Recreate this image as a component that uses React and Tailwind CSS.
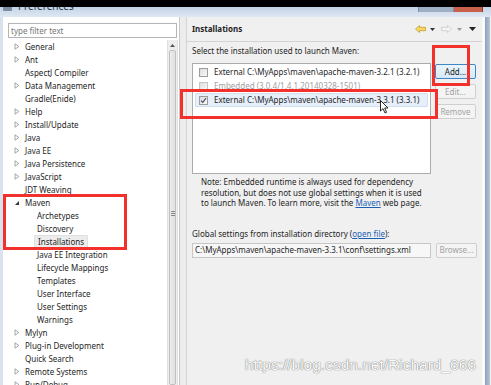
import { useState } from "react";

const tree = [
  { label: "General", arrow: true },
  { label: "Ant", arrow: true },
  { label: "AspectJ Compiler" },
  { label: "Data Management", arrow: true },
  { label: "Gradle(Enide)" },
  { label: "Help", arrow: true },
  { label: "Install/Update", arrow: true },
  { label: "Java", arrow: true },
  { label: "Java EE", arrow: true },
  { label: "Java Persistence", arrow: true },
  { label: "JavaScript", arrow: true },
  { label: "JDT Weaving" },
  { label: "Maven", open: true },
  { label: "Archetypes", child: true },
  { label: "Discovery", child: true },
  { label: "Installations", child: true, selected: true },
  { label: "Java EE Integration", child: true },
  { label: "Lifecycle Mappings", child: true },
  { label: "Templates", child: true },
  { label: "User Interface", child: true },
  { label: "User Settings", child: true },
  { label: "Warnings", child: true },
  { label: "Mylyn", arrow: true },
  { label: "Plug-in Development", arrow: true },
  { label: "Quick Search" },
  { label: "Remote Systems", arrow: true },
  { label: "Run/Debug", arrow: true },
];

const installs = [
  { label: "External C:\\MyApps\\maven\\apache-maven-3.2.1 (3.2.1)" },
  { label: "Embedded (3.0.4/1.4.1.20140328-1501)", dim: true },
  { label: "External C:\\MyApps\\maven\\apache-maven-3.3.1 (3.3.1)", checked: true },
];

const Arrow = ({ open }) =>
  open ? (
    <svg width="6" height="6" viewBox="0 0 6 6" className="shrink-0">
      <path d="M5 1 L5 5 L1 5 Z" fill="#333" />
    </svg>
  ) : (
    <svg width="6" height="7" viewBox="0 0 6 7" className="shrink-0">
      <path d="M1 0.8 L4.8 3.5 L1 6.2 Z" fill="none" stroke="#9a9a9a" strokeWidth="0.9" />
    </svg>
  );

const Checkbox = ({ checked, dim }) => (
  <div
    className={`w-[9px] h-[9px] shrink-0 border flex items-center justify-center bg-gradient-to-br from-[#dcdcdc] to-[#fafafa] ${
      dim ? "border-[#c4c4c4]" : "border-[#9c9c9c]"
    }`}
  >
    {checked && (
      <svg width="7" height="7" viewBox="0 0 7 7">
        <path d="M1 3.6 L2.8 5.4 L6 1.2" fill="none" stroke="#3b4f6e" strokeWidth="1.1" />
      </svg>
    )}
  </div>
);

const Btn = ({ children, focus, disabled }) => (
  <div
    className={`h-[15px] w-[41px] rounded-[2px] border flex items-center justify-center whitespace-nowrap ${
      focus
        ? "border-[#3f86c4] bg-gradient-to-b from-[#eaf4fc] to-[#d6e9f8] text-[#222]"
        : disabled
        ? "border-[#cfcfcf] bg-[#f4f4f4] text-[#a3a3a3]"
        : "border-[#acacac] bg-[#eaeaea] text-[#222]"
    }`}
  >
    {children}
  </div>
);

const App = () => {
  const [filter, setFilter] = useState("");

  return (
    <div className="w-[491px] h-[385px] bg-black overflow-hidden relative font-['Noto_Sans',sans-serif] text-[8px] text-[#1e1e1e] whitespace-nowrap">
      {/* title bar */}
      <div className="mt-[7px] h-[10px] bg-gradient-to-b from-[#c3d3e6] to-[#dfe8f3] flex items-start overflow-hidden relative">
        <div className="ml-[3px] mt-[-3px] w-[9px] h-[7px] bg-[#7d8da3] rounded-[1px]" />
        <span className="ml-[6px] mt-[-8px] text-[10px] text-[#2a3a4e] leading-[14px]">Preferences</span>
        <div className="absolute right-[8px] top-0 flex h-[5px]">
          <div className="w-[36px] h-full bg-[#9fb0c4] border-x border-[#7c8ea5]" />
          <div className="w-[29px] h-full bg-[#c8604a] border-r border-[#8a3a2c]" />
        </div>
      </div>

      {/* body */}
      <div className="flex h-[368px] bg-[#f0f0f0]">
        <div className="w-[3px] bg-[#d9e3ee]" />

        {/* left pane */}
        <div className="w-[176px] bg-white flex flex-col">
          <div className="pt-[6px] pl-[5px]">
            <input
              value={filter}
              onChange={(e) => setFilter(e.target.value)}
              placeholder="type filter text"
              className="w-[169px] h-[15px] border border-[#b5b5b5] px-[2px] text-[8px] outline-none placeholder:text-[#777]"
            />
          </div>
          <div className="flex mt-[2px] flex-1 min-h-0">
            <div className="w-[164px]">
              {tree.map((item) => (
                <div key={item.label} className="h-[13px] flex items-center">
                  {item.child ? (
                    <span
                      className={`ml-[31px] px-[3px] leading-[11px] ${
                        item.selected ? "bg-[#ececec] border border-[#e0e0e0] rounded-[1px]" : ""
                      }`}
                    >
                      {item.label}
                    </span>
                  ) : (
                    <>
                      <div className="w-[22px] flex justify-end pr-[5px]">
                        {(item.arrow || item.open) && <Arrow open={item.open} />}
                      </div>
                      <span>{item.label}</span>
                    </>
                  )}
                </div>
              ))}
            </div>
            <div className="w-[11px] bg-[#eeeeee] border-x border-[#e0e0e0] flex flex-col">
              <div className="h-[10px] flex items-center justify-center">
                <svg width="5" height="3" viewBox="0 0 5 3">
                  <path d="M0 3 L2.5 0 L5 3 Z" fill="#555" />
                </svg>
              </div>
              <div className="flex-1 mx-[1px] bg-gradient-to-r from-[#ececec] to-[#e0e0e0] border border-[#c0c0c0] rounded-[2px] flex flex-col items-center pt-[160px] gap-[1px]">
                <div className="w-[4px] h-px bg-[#888]" />
                <div className="w-[4px] h-px bg-[#888]" />
                <div className="w-[4px] h-px bg-[#888]" />
              </div>
            </div>
          </div>
        </div>

        {/* sash */}
        <div className="w-[7px] bg-[#ececec] border-l border-[#c8c8c8]" />

        {/* right pane */}
        <div className="w-[296px] border-l border-[#d4d4d4] flex flex-col">
          <div className="h-[25px] flex items-center pl-[5px] pr-[6px] border-b border-[#d3d3d3]">
            <span className="font-bold">Installations</span>
            <div className="ml-auto flex items-center">
              <svg width="11" height="8" viewBox="0 0 11 8">
                <path d="M0.5 4 L4.5 0.5 L4.5 2.3 L10.5 2.3 L10.5 5.7 L4.5 5.7 L4.5 7.5 Z" fill="#f6d86a" stroke="#c89a2a" strokeWidth="0.8" />
              </svg>
              <svg width="5" height="3" viewBox="0 0 5 3" className="ml-[4px]">
                <path d="M0 0 L5 0 L2.5 3 Z" fill="#333" />
              </svg>
              <svg width="11" height="8" viewBox="0 0 11 8" className="ml-[6px]">
                <path d="M10.5 4 L6.5 0.5 L6.5 2.3 L0.5 2.3 L0.5 5.7 L6.5 5.7 L6.5 7.5 Z" fill="#f4f4f4" stroke="#c9c9c9" strokeWidth="0.8" />
              </svg>
              <svg width="5" height="3" viewBox="0 0 5 3" className="ml-[5px]">
                <path d="M0 0 L5 0 L2.5 3 Z" fill="#9a9a9a" />
              </svg>
              <svg width="7" height="4" viewBox="0 0 7 4" className="ml-[7px]">
                <path d="M0 0 L7 0 L3.5 4 Z" fill="#222" />
              </svg>
            </div>
          </div>

          <div className="pl-[5px] pt-[3px]">
            <div className="leading-[12px]">Select the installation used to launch Maven:</div>
            <div className="flex mt-[6px] gap-[4px]">
              <div className="w-[239px] h-[111px] bg-white border border-[#acacac] pt-[1px]">
                {installs.map((row) => (
                  <div
                    key={row.label}
                    className={`h-[14px] mx-[2px] flex items-center pl-[3px] gap-[6px] ${
                      row.checked ? "bg-[#e6effa] border border-[#cfdff2] rounded-[1px]" : "border border-transparent"
                    } ${row.dim ? "text-[#a0a0a0]" : ""}`}
                  >
                    <Checkbox checked={row.checked} dim={row.dim} />
                    <span>{row.label}</span>
                  </div>
                ))}
              </div>
              <div className="flex flex-col gap-[5px] pt-[1px]">
                <Btn focus>Add...</Btn>
                <Btn disabled>Edit...</Btn>
                <Btn disabled>Remove</Btn>
              </div>
            </div>

            <div className="ml-[9px] mt-[3px] leading-[10.5px]">
              Note: Embedded runtime is always used for dependency
              <br />
              resolution, but does not use global settings when it is used
              <br />
              to launch Maven. To learn more, visit the{" "}
              <span className="text-[#1a5fb4] underline">Maven</span> web page.
            </div>

            <div className="mt-[19px] leading-[12px]">
              Global settings from installation directory (<span className="text-[#1a5fb4] underline">open file</span>):
            </div>
            <div className="flex mt-[3px] gap-[5px]">
              <div className="w-[239px] h-[15px] bg-[#f7f7f7] border border-[#c6c6c6] flex items-center pl-[2px]">
                C:\MyApps\maven\apache-maven-3.3.1\conf\settings.xml
              </div>
              <Btn disabled>Browse...</Btn>
            </div>
          </div>
        </div>

        {/* window frame right */}
        <div className="w-[3px] bg-[#fafafa]" />
        <div className="w-[5px] bg-gradient-to-r from-[#8da2bd] to-[#b7c6d8]" />
      </div>

      {/* annotations */}
      <div className="absolute left-[3px] top-[194px] w-[124px] h-[56px] border-[3px] border-[#f2302c]" />
      <div className="absolute left-[432px] top-[45px] w-[38px] h-[41px] border-[3px] border-[#f2302c]" />
      <div className="absolute left-[180px] top-[89px] w-[258px] h-[30px] border-[3px] border-[#f2302c]" />

      {/* mouse cursor */}
      <svg className="absolute left-[380px] top-[100px]" width="9" height="14" viewBox="0 0 9 14">
        <path d="M0.5 0.5 L0.5 11 L3 8.6 L5 13 L6.6 12.3 L4.7 8 L8 8 Z" fill="#fff" stroke="#111" strokeWidth="0.9" />
      </svg>

      {/* watermark */}
      <div className="absolute left-[245px] top-[356px] font-['Liberation_Sans',sans-serif] text-[15.5px] leading-[18px] text-[#fbfbfb] [text-shadow:0_0_1px_#7a7a7a,0_0_1px_#7a7a7a]">
        https://blog.csdn.net/Richard_666
      </div>
    </div>
  );
};

export default App;
